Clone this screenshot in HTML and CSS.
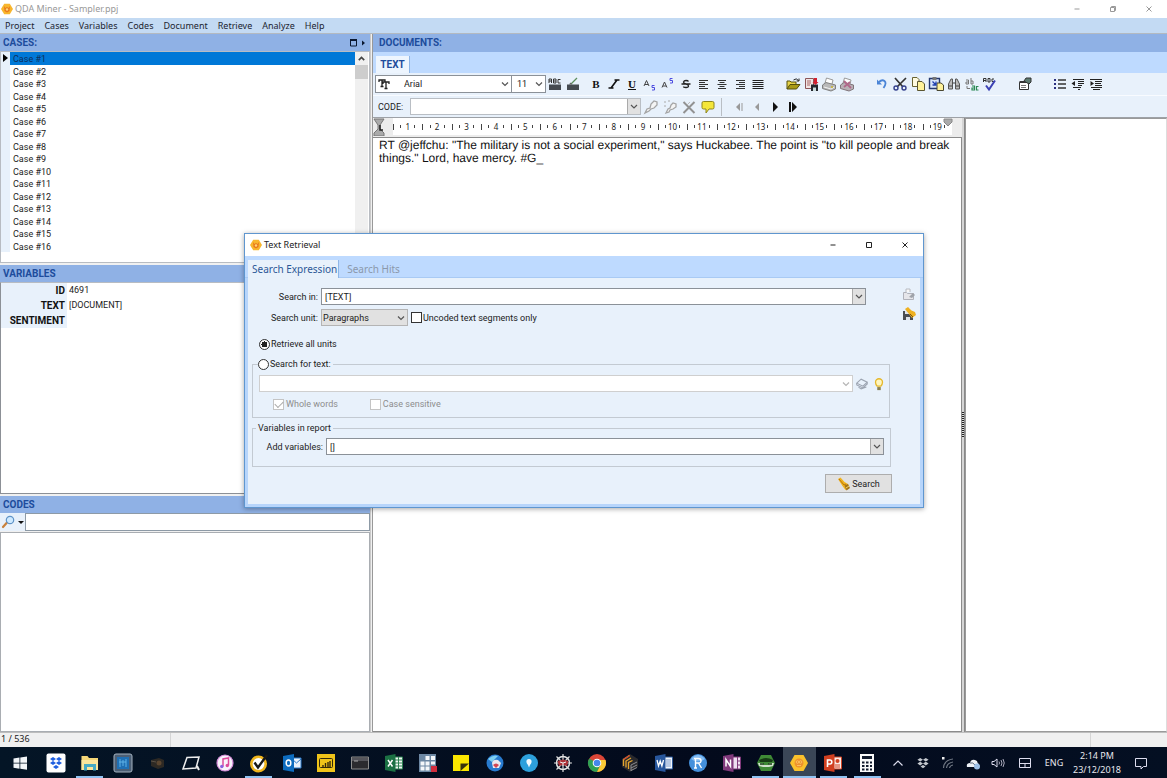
FILE: index.html
```
<!DOCTYPE html>
<html lang="en">
<head>
<meta charset="utf-8">
<title>QDA Miner - Sampler.ppj</title>
<link rel="stylesheet" href="styles.css">
</head>
<body>
<svg class="defs" aria-hidden="true">
  <defs>
    <symbol id="logo" viewBox="0 0 12 12"><path d="M3.200.8h5.600L12 6 8.800 11.200H3.200L0 6z" fill="#f8b62d"/><path d="M3 3l1.500 2L6 4l1.500 1L9 3l-.5 5L6 9.500 3.500 8z" fill="#e8791c"/><circle cx="6" cy="6.500" r="1.200" fill="#ffd778"/></symbol>
    <symbol id="chev" viewBox="0 0 12 12"><path d="M3 4.500l3 3 3-3" fill="none" stroke="currentColor" stroke-width="1.200"/></symbol>
    <symbol id="min" viewBox="0 0 12 12"><path d="M3.500 6h5" stroke="currentColor"/></symbol>
    <symbol id="max" viewBox="0 0 12 12"><path d="M3.500 3.500h5v5h-5z" fill="none" stroke="currentColor"/></symbol>
    <symbol id="close" viewBox="0 0 12 12"><path d="M3.500 3.500l5 5m0-5l-5 5" stroke="currentColor" fill="none"/></symbol>
    <symbol id="torch" viewBox="0 0 14 14"><path d="M1 2l2.500-1.500 4 4.500L11 7l1 4-3.500 2L5.500 9z" fill="#f0b21d"/><path d="M7.500 8.500l3.500-1.500 2 4-3.500 2.500z" fill="#a3741c"/><path d="M2 2l5 6 2-1" fill="none" stroke="#b9770c"/><path d="M9 11l3-2" stroke="#fbd764"/></symbol>
  </defs>
</svg>
<div class="app">
  <header class="titlebar">
    <svg class="logo"><use href="#logo"/></svg>
    <h1>QDA Miner - Sampler.ppj</h1>
    <div class="winbtns">
      <button aria-label="Minimize"><svg><use href="#min"/></svg></button>
      <button aria-label="Restore"><svg viewBox="0 0 12 12"><path d="M3.500 4.500h4v4h-4zM4.500 4.500v-1h4v4h-1" fill="none" stroke="currentColor"/></svg></button>
      <button aria-label="Close"><svg><use href="#close"/></svg></button>
    </div>
  </header>
  <nav class="menu">
    <button>Project</button><button>Cases</button><button>Variables</button><button>Codes</button><button>Document</button><button>Retrieve</button><button>Analyze</button><button>Help</button>
  </nav>
  <main class="work">
    <div class="left">
      <section class="panel cases">
        <h2 class="head"><span>CASES:</span>
          <svg class="headicons" viewBox="0 0 18 10"><path d="M1.500 2h6v6h-6z" fill="none" stroke="#0b1830"/><path d="M1 2h7" stroke="#0b1830" stroke-width="2"/><path d="M13 2.500v5l3-2.500z" fill="#0b1830"/></svg>
        </h2>
        <div class="listbox">
          <ul class="caselist">
            <li class="on">Case #1</li><li>Case #2</li><li>Case #3</li><li>Case #4</li><li>Case #5</li><li>Case #6</li><li>Case #7</li><li>Case #8</li><li>Case #9</li><li>Case #10</li><li>Case #11</li><li>Case #12</li><li>Case #13</li><li>Case #14</li><li>Case #15</li><li>Case #16</li>
          </ul>
          <div class="scroll">
            <svg viewBox="0 0 12 12"><path d="M3.500 7.500L6 5l2.500 2.500" fill="none" stroke="#444" stroke-width="1.500"/></svg>
            <div class="thumb"></div>
          </div>
        </div>
      </section>
      <section class="panel vars">
        <h2 class="head">VARIABLES</h2>
        <div class="varbox">
          <table>
            <tr><th scope="row">ID</th><td>4691</td></tr>
            <tr><th scope="row">TEXT</th><td>[DOCUMENT]</td></tr>
            <tr><th scope="row">SENTIMENT</th><td></td></tr>
          </table>
        </div>
      </section>
      <section class="panel codes">
        <h2 class="head">CODES</h2>
        <div class="codesearch">
          <button aria-label="Search codes"><svg viewBox="0 0 25 16"><path d="M3 13l4-4.500" stroke="#c9813c" stroke-width="2.200" stroke-linecap="round"/><circle cx="10" cy="6" r="3.700" fill="#cfeaff" stroke="#5f93c8" stroke-width="1.200"/><path d="M18 7h6l-3 3z" fill="#111"/></svg></button>
          <input type="text" aria-label="Code filter">
        </div>
        <div class="codebox"></div>
      </section>
    </div>
    <section class="docs">
      <h2 class="head">DOCUMENTS:</h2>
      <div class="tabs"><button class="tab">TEXT</button></div>
      <div class="toolbar">
        <div class="combo font">
          <select aria-label="Font"><option>Arial</option></select>
          <svg class="tt" viewBox="0 0 12 12"><path d="M1 4V2h6v2M4 2v6.500M2.500 8.500h3M5 6V4h6v2M8 4v6.500M6.500 10.500h3" fill="none" stroke="#222" stroke-width="1.300"/></svg>
          <svg class="ch"><use href="#chev"/></svg>
        </div>
        <div class="combo size"><select aria-label="Font size"><option>11</option></select><svg class="ch"><use href="#chev"/></svg></div>
        <div class="grp">
          <button aria-label="Text color"><svg viewBox="0 0 16 16"><path d="M2 8.500h12V14H2z" fill="#454a50"/><path d="M2 7V3h2.500v4M2 5h2.500M6.500 3v4h2.500V5H6.500M9 5V3H6.500M13.500 3.500H11V7h2.500" fill="none" stroke="#333"/></svg></button>
          <button aria-label="Highlight"><svg viewBox="0 0 16 16"><path d="M2 8.500h12V14H2z" fill="#454a50"/><path d="M6 8l6-6" stroke="#5d8f5d" stroke-width="1.200"/><path d="M4 8.500l1.500-2 2 2z" fill="#666"/></svg></button>
        </div>
        <div class="grp g2">
          <button aria-label="Bold" class="b">B</button>
          <button aria-label="Italic"><svg viewBox="0 0 16 16"><path d="M8.500 4h5M2.500 12h5M11 4l-6 8" stroke="#111" stroke-width="1.600"/></svg></button>
          <button aria-label="Underline" class="b u">U</button>
          <button aria-label="Subscript"><svg viewBox="0 0 16 16"><path d="M2 10l2.500-5.500L7 10M3 8.500h3" fill="none" stroke="#444"/><path d="M12.500 9.500H10V11.500h2.500v2.500H10" fill="none" stroke="#4d4de0"/></svg></button>
          <button aria-label="Superscript"><svg viewBox="0 0 16 16"><path d="M2 11.500L4.500 6 7 11.500M3 10h3" fill="none" stroke="#444"/><path d="M12.500 2.500H10V4.500h2.500V7H10" fill="none" stroke="#4d4de0"/></svg></button>
          <button aria-label="Strikethrough"><svg viewBox="0 0 16 16"><path d="M10.500 5.500Q10 4.500 8 4.500T5.500 6q0 1.500 2.500 2t2.500 2q0 1.500-2.500 1.500T5.500 10.500M3.500 8h9" fill="none" stroke="#222" stroke-width="1.300"/></svg></button>
          <button aria-label="Align left"><svg viewBox="0 0 16 16"><path d="M3 4.500h9M3 6.500h6M3 8.500h9M3 10.500h6M3 12.500h9" stroke="#333"/></svg></button>
          <button aria-label="Center"><svg viewBox="0 0 16 16"><path d="M4 4.500h8M5.500 6.500h5M3.500 8.500h9M5.500 10.500h5M4 12.500h8" stroke="#333"/></svg></button>
          <button aria-label="Align right"><svg viewBox="0 0 16 16"><path d="M4 4.500h9M7 6.500h6M4 8.500h9M7 10.500h6M4 12.500h9" stroke="#333"/></svg></button>
          <button aria-label="Justify"><svg viewBox="0 0 16 16"><path d="M2.500 4.500h11M2.500 6.500h11M2.500 8.500h11M2.500 10.500h11M2.500 12.500h11" stroke="#222"/></svg></button>
        </div>
        <div class="grp g3">
          <button aria-label="Open"><svg viewBox="0 0 16 16"><path d="M2 13V5h3l1 1h5v3" fill="#e8d44a" stroke="#55500c"/><path d="M2 13l3-4.500h10L11.500 13z" fill="#a89a17" stroke="#55500c"/><path d="M8.500 4q3-2.500 5 .5M14 2.500v2.500h-2.500" fill="none" stroke="#222"/></svg></button>
          <button aria-label="Export"><svg viewBox="0 0 16 16"><path d="M2.500 2.500h8v10h-8z" fill="#f0e4e4" stroke="#8c5558"/><path d="M4 5h4M4 7h4M4 9h3" stroke="#a66"/><path d="M8 8.500h7V15H8z" fill="#25272d"/><path d="M10 11.500h3V15h-3z" fill="#cdd"/><path d="M11 2h3v4h1.500L12.500 9 9.500 6H11z" fill="#d41f2f"/></svg></button>
          <button aria-label="Print"><svg viewBox="0 0 16 16"><path d="M4 7l1.500-5L12 4l-1 4" fill="#fff" stroke="#999"/><path d="M1.500 9L5 6.500 14.500 9v4L10 15 1.500 12.500z" fill="#b9b9b9" stroke="#808080"/><path d="M3 11l7 2 3.500-2" stroke="#f1f1f1" fill="none"/><path d="M10 11h2" stroke="#c9b52e" stroke-width="1.500"/></svg></button>
          <button aria-label="Print preview"><svg viewBox="0 0 16 16"><path d="M4 7l1.500-5L12 4l-1 4" fill="#fff" stroke="#999"/><path d="M1.500 9L5 6.500 14.500 9v4L10 15 1.500 12.500z" fill="#b9b0b6" stroke="#80757a"/><path d="M5 5l7 7M11 6l-6 5" stroke="#b0688a" stroke-width="1.800"/></svg></button>
        </div>
        <div class="grp g4">
          <button aria-label="Undo"><svg viewBox="0 0 16 16"><path d="M5 6Q8 3 10.500 5T9.500 12" fill="none" stroke="#4a84d6" stroke-width="1.800"/><path d="M3 3.500v5h5z" fill="#4a84d6"/></svg></button>
          <button aria-label="Cut"><svg viewBox="0 0 16 16"><path d="M3 2l8 9M14 2l-9 9" stroke="#333" stroke-width="1.700"/><circle cx="4" cy="12" r="2" fill="none" stroke="#34408c" stroke-width="1.400"/><circle cx="12" cy="12" r="2" fill="none" stroke="#34408c" stroke-width="1.400"/></svg></button>
          <button aria-label="Copy"><svg viewBox="0 0 16 16"><path d="M2.500 1.500h4.500l2 2v7H2.500z" fill="#fffbe0" stroke="#6a6330"/><path d="M7.500 5.500h4.500l2.500 2.500v6.500h-7z" fill="#fff29a" stroke="#5b5530"/></svg></button>
          <button aria-label="Paste"><svg viewBox="0 0 16 16"><path d="M1.500 2.500h10v10h-10z" fill="#d8e5fa" stroke="#25396f" stroke-width="1.400"/><path d="M4.500 1h4v3h-4z" fill="#777"/><path d="M9 7h4l2.500 2v5.500H9z" fill="#fff29a" stroke="#4a4730"/><path d="M4.500 5.500l3.500 3.500M8 5.500V9H4.500" stroke="#1e3fae" stroke-width="1.300" fill="none"/></svg></button>
          <button aria-label="Find"><svg viewBox="0 0 16 16"><path d="M2.500 13V8L5 3h1.500v10zM13.500 13V8L11 3H9.500v10z" fill="#bcbcbc" stroke="#555"/><path d="M6.500 7h3M3 10h3M10 10h3" stroke="#444"/></svg></button>
          <button aria-label="Replace"><svg viewBox="0 0 16 16"><path d="M2 4h2.500v4H2V6h2.500M7 2v6h2V5H7" fill="none" stroke="#777"/><path d="M8 10h2.500v4H8v-2h2.500M14.500 10.500h-2V14h2" fill="none" stroke="#2c8a55" stroke-width="1.200"/><path d="M3 10v2.500h3" fill="none" stroke="#777"/></svg></button>
          <button aria-label="Spelling"><svg viewBox="0 0 16 16"><path d="M1.500 6V2.500H4V6M1.500 4.500H4M6 2.500V6h2V2.500zM12 3h-2v2.500h2" fill="none" stroke="#333"/><path d="M4 9.500l3 4 6-9" fill="none" stroke="#3c42b4" stroke-width="2"/></svg></button>
        </div>
        <div class="grp g4">
          <button aria-label="Properties"><svg viewBox="0 0 16 16"><path d="M2.500 6.500h9v7h-9z" fill="#fff" stroke="#333"/><path d="M2.500 6h9" stroke="#333" stroke-width="2"/><path d="M4 9.500h5M4 11.500h5" stroke="#777"/><path d="M7 5l2-3h5v4l-2 2z" fill="#5d7a70" stroke="#333"/></svg></button>
        </div>
        <div class="grp g4">
          <button aria-label="Bullets"><svg viewBox="0 0 16 16"><path d="M2 3h2v2H2zM2 7h2v2H2zM2 11h2v2H2z" fill="#2a2f80"/><path d="M6 4h8M6 8h8M6 12h8" stroke="#333" stroke-width="1.400"/></svg></button>
          <button aria-label="Outdent"><svg viewBox="0 0 16 16"><path d="M3 3.500h11M8 5.500h6M8 7.500h6M8 9.500h4M3 11.500h8M8 13.500h2" stroke="#222"/><path d="M1.500 7.500L5 5v5z" fill="#222"/></svg></button>
          <button aria-label="Indent"><svg viewBox="0 0 16 16"><path d="M2 3.500h12M7 5.500h7M7 7.500h6M7 9.500h7M3 11.500h11M5 13.500h7" stroke="#222"/><path d="M6 7.500L2.500 5v5z" fill="#222"/></svg></button>
        </div>
      </div>
      <div class="codebar">
        <label for="code">CODE:</label>
        <div class="combo code"><select id="code"><option></option></select><svg class="ch btn"><use href="#chev"/></svg></div>
        <button aria-label="Assign code"><svg viewBox="0 0 16 16"><path d="M2 14l2-4 3-1 1-4 3-3 3 1v3l-3 3-3 1-2 2z" fill="#f4f4f4" stroke="#a4a4a4" stroke-width="1.300"/></svg></button>
        <button aria-label="Edit code"><svg viewBox="0 0 16 16"><path d="M4 14l2-4 2-1 1-3 2-2 3 1v3l-3 2-3 1-1 2z" fill="#f4f4f4" stroke="#a4a4a4" stroke-width="1.300"/><path d="M2 3h2M2 7h2M6 2h2" stroke="#aaa"/></svg></button>
        <button aria-label="Delete code"><svg viewBox="0 0 16 16"><path d="M2.500 3l11 11M13.500 3l-11 11" stroke="#929292" stroke-width="2"/><path d="M6 6l3-3" stroke="#bbb"/></svg></button>
        <button aria-label="Comment"><svg viewBox="0 0 16 16"><path d="M3.500 2.500h9q1.500 0 1.500 1.500v4.500q0 1.500-1.500 1.500H9l-3 4v-4H3.500Q2 10 2 8.500V4q0-1.500 1.500-1.500z" fill="#f4e63a" stroke="#8e861f"/></svg></button>
        <div class="nav">
          <button aria-label="First"><svg viewBox="0 0 16 16"><path d="M9 4v8L5 8zM10.500 4h1v8h-1z" fill="#999"/></svg></button>
          <button aria-label="Previous"><svg viewBox="0 0 16 16"><path d="M10 4v8L6 8z" fill="#999"/></svg></button>
          <button aria-label="Next"><svg viewBox="0 0 16 16"><path d="M6 3v10l5-5z" fill="#111"/></svg></button>
          <button aria-label="Last"><svg viewBox="0 0 16 16"><path d="M7 3v10l5-5zM4 3h2v10H4z" fill="#111"/></svg></button>
        </div>
      </div>
      <div class="docarea">
        <div class="page">
          <div class="ruler">
            <svg class="rmark" viewBox="0 0 12 18"><path d="M1 1h10L7 7v4l4 4v3H1v-3l4-4V7z" fill="#aaa" stroke="#777"/><path d="M7 7v5h3" fill="none" stroke="#222" stroke-width="1.500"/></svg>
            <div class="nums"><span>1</span><span>2</span><span>3</span><span>4</span><span>5</span><span>6</span><span>7</span><span>8</span><span>9</span><span>10</span><span>11</span><span>12</span><span>13</span><span>14</span><span>15</span><span>16</span><span>17</span><span>18</span><span>19</span></div>
            <svg class="rend" viewBox="0 0 12 18"><path d="M2 1h8v3L6 8 2 4z" fill="#aaa" stroke="#888"/></svg>
          </div>
          <p class="text">RT @jeffchu: "The military is not a social experiment," says Huckabee. The point is "to kill people and break things." Lord, have mercy. #G_</p>
        </div>
        <div class="split"><i></i></div>
        <div class="margin"></div>
      </div>
    </section>
  </main>
  <footer class="status"><span>1 / 536</span><span></span><span></span></footer>
  <div class="taskbar">
    <button class="start" aria-label="Start"><svg viewBox="0 0 20 20"><path d="M3.500 5.500l6-1v5.200h-6zM10.300 4.400L17 3.500v6.200h-6.700zM3.500 10.500h6v5.200l-6-1zM10.300 10.500H17v6.200l-6.700-.9z" fill="#f2f5f8"/></svg></button>
    <div class="apps">
      <button aria-label="Dropbox"><svg viewBox="0 0 20 20"><rect x=".5" y=".5" width="19" height="19" rx="2" fill="#fff"/><path d="M7 4l3 2-3 2-3-2zM13 4l3 2-3 2-3-2zM7 8l3 2-3 2-3-2zM13 8l3 2-3 2-3-2zM10 12l3 2-3 2-3-2z" fill="#1f5fe0"/></svg></button>
      <button aria-label="File Explorer" class="run"><svg viewBox="0 0 20 20"><path d="M1.500 3h6l1.500 2h9v12h-16.500z" fill="#f5d778"/><path d="M1.500 7h16.500v10H1.500z" fill="#fbe59b"/><path d="M4 17.500V11h12v6.500h-3V14H7v3.500z" fill="#46aac4"/></svg></button>
      <button aria-label="Viewer"><svg viewBox="0 0 20 20"><rect x="1" y="1" width="18" height="18" rx="2" fill="#4c5f75" stroke="#a5b3c0"/><path d="M4 4h12v12H4z" fill="#1f6fb4"/><path d="M7 6v8M6 9h7M10 7v6M13 6v8" stroke="#5fb2e6"/></svg></button>
      <button aria-label="Camera"><svg viewBox="0 0 20 20"><path d="M4 7l8-2 5 2v7l-6 2-7-3z" fill="#2d2924"/><circle cx="12" cy="10" r="2.500" fill="#5b4630"/><path d="M4 8l5 1" stroke="#5a5146"/></svg></button>
      <button aria-label="Tablet"><svg viewBox="0 0 20 20"><path d="M6 4.500l12-.5-3 11-13 1z" fill="none" stroke="#eee" stroke-width="1.500"/><path d="M16 13l2 4" stroke="#eee" stroke-width="2"/></svg></button>
      <button aria-label="iTunes"><svg viewBox="0 0 20 20"><circle cx="10" cy="10" r="8" fill="#f8f3fb" stroke="#d48bd8" stroke-width="1.200"/><path d="M8 13.500V6l5.500-1v7.500" fill="none" stroke="#dd4c9c" stroke-width="1.500"/><circle cx="6.800" cy="13.500" r="1.700" fill="#8a62e0"/><circle cx="12.300" cy="12.500" r="1.700" fill="#dd4c9c"/></svg></button>
      <button aria-label="Norton" class="run"><svg viewBox="0 0 20 20"><circle cx="9.500" cy="11" r="7.200" fill="#fff" stroke="#efb51d" stroke-width="2.600"/><path d="M5.500 9.500l3.500 5L18 2" fill="none" stroke="#181818" stroke-width="2.400"/></svg></button>
      <button aria-label="Outlook"><svg viewBox="0 0 20 20"><path d="M10 5h9v10h-9z" fill="#e9f2fb" stroke="#2a79c8"/><path d="M10 6l4.500 4L19 6" fill="none" stroke="#2a79c8"/><path d="M1 3l11-2v18L1 17z" fill="#0d6cbf"/><ellipse cx="6.500" cy="10" rx="2.300" ry="3" fill="none" stroke="#fff" stroke-width="1.500"/></svg></button>
      <button aria-label="Power BI"><svg viewBox="0 0 20 20"><path d="M1 1h18v18H1z" fill="#f0c419"/><rect x="3.500" y="5.500" width="13" height="9" rx="1" fill="none" stroke="#33290a"/><path d="M7 15v-3M9.500 15v-5M12 15V9M14 15V8" stroke="#33290a" stroke-width="1.400"/></svg></button>
      <button aria-label="Terminal"><svg viewBox="0 0 20 20"><path d="M1.500 4h17v12h-17z" fill="#2b2b2f" stroke="#8d8d8d"/><path d="M2 5h16v3H2z" fill="#55555b"/><path d="M4 8h4" stroke="#aaa"/></svg></button>
      <button aria-label="Excel"><svg viewBox="0 0 20 20"><path d="M10 4h8.500v12H10z" fill="#f0f7f2" stroke="#2c8152"/><path d="M11 7h7M11 10h7M11 13h7M14.500 4v12" stroke="#2c8152"/><path d="M1 3l10.500-2v18L1 17z" fill="#1b7043"/><path d="M4 7l4.500 6.500M8.500 7L4 13.500" stroke="#fff" stroke-width="1.500"/></svg></button>
      <button aria-label="Grid"><svg viewBox="0 0 20 20"><path d="M1 1h17v18H1z" fill="#6c87a3"/><path d="M7.500 3h4v4h-4zM13 3h4v4h-4zM2.500 8.500h4v4h-4zM7.500 8.500h4v4h-4zM13 8.500h4v3h-4zM2.500 13.500h4v4h-4zM7.500 13.500h4v4h-4z" fill="#f4f7fa"/><path d="M13 13h6v6h-6z" fill="#d22d3d"/></svg></button>
      <button aria-label="Sticky Notes"><svg viewBox="0 0 20 20"><path d="M2 2h16v16H2z" fill="#fbe600"/><path d="M9.500 10.500H18L9.500 18z" fill="#38330b"/></svg></button>
      <button aria-label="Globe"><svg viewBox="0 0 20 20"><circle cx="10" cy="10" r="8.500" fill="#287bd0"/><path d="M3 6q5-5 10-3l-6 6z" fill="#7ed0f2"/><path d="M7 10q1-4 6-3l3 3-2 5H8z" fill="#eae8ee"/><path d="M8 12q3-3 6 0l-3 3z" fill="#d14552"/></svg></button>
      <button aria-label="Map"><svg viewBox="0 0 20 20"><circle cx="10" cy="10" r="9" fill="#2da0dc"/><path d="M10 6a2.600 2.600 0 012.600 2.600Q12.600 10.300 11 12l-1 2.500-1-2.500Q7.400 10.300 7.400 8.600A2.600 2.600 0 0110 6z" fill="#f4fbff"/></svg></button>
      <button aria-label="Web"><svg viewBox="0 0 20 20"><path d="M10 1v18M1 10h18M3.500 3.500l13 13M16.500 3.500l-13 13" stroke="#d9d9d9" stroke-width="1.200"/><circle cx="10" cy="10" r="6.500" fill="none" stroke="#e3e3e3" stroke-width="1.500"/><path d="M4.500 8L10 6.500 15.500 8l-1.500 5-4-1-4 1z" fill="#ab3238"/><path d="M7 9l3 1 3-1M10 10v3" fill="none" stroke="#eee"/></svg></button>
      <button aria-label="Chrome"><svg viewBox="0 0 20 20"><circle cx="10" cy="10" r="9" fill="#dc4637"/><path d="M10 10L2.200 5.500A9 9 0 0010 19l3-6z" fill="#2ea154"/><path d="M10 19a9 9 0 008.500-12H10l3.500 5z" fill="#fbcb36"/><circle cx="10" cy="10" r="4.300" fill="#fff"/><circle cx="10" cy="10" r="3.300" fill="#4587ec"/></svg></button>
      <button aria-label="Hexagons"><svg viewBox="0 0 20 20"><path d="M2 6l8-5 8 5v8l-8 5-8-5z" fill="#29292d"/><path d="M3.500 13V6.500l6-4M6 14.500V8l5-3M8.500 16V9.500l4-2" fill="none" stroke="#e4a52d" stroke-width="1.300"/><path d="M3.500 6.500l6-4" stroke="#cc4930" stroke-width="1.500"/><path d="M11 18v-6l6-3M11 15l6-3M11 17.500l6-3" fill="none" stroke="#8d8d92"/></svg></button>
      <button aria-label="Word"><svg viewBox="0 0 20 20"><path d="M10 4h8.500v12H10z" fill="#f2f6fc" stroke="#2b5797"/><path d="M12 7h5M12 9h5M12 11h5M12 13h5" stroke="#7c9bcc"/><path d="M1 3l10.500-2v18L1 17z" fill="#27569c"/><path d="M3 7l1.500 6 1.700-5 1.700 5L9.500 7" fill="none" stroke="#fff" stroke-width="1.300"/></svg></button>
      <button aria-label="RStudio"><svg viewBox="0 0 20 20"><circle cx="10" cy="10" r="9" fill="#4490dc"/><path d="M3 6q7-8 14 0-7 5-14 0z" fill="#86bdf2"/><path d="M7.500 15V5.500h3q2.500 0 2.500 2.300T10.500 10h-3M10.500 10l3 5M6 5.500h2M6 15h3" fill="none" stroke="#fff" stroke-width="1.400"/></svg></button>
      <button aria-label="OneNote"><svg viewBox="0 0 20 20"><path d="M10 4h8.500v12H10z" fill="#eedff0" stroke="#80397b"/><path d="M15.500 4v12M15.500 8h3M15.500 12h3" stroke="#80397b"/><path d="M1 3l10.500-2v18L1 17z" fill="#80397b"/><path d="M4 13.500v-7l4.500 7v-7" fill="none" stroke="#fff" stroke-width="1.500"/></svg></button>
      <button aria-label="Spy" class="run"><svg viewBox="0 0 20 20"><path d="M5 2h10l4 8-4 8H5l-4-8z" fill="#3f8a36"/><path d="M3 7q7-4 14 0l-1 2H4z" fill="#173c15"/><path d="M2 10h5l1 2h4l1-2h5l-1 3-4 1H7l-4-1z" fill="#cfe0cb"/><path d="M4 11h4M12 11h4" stroke="#173c15" stroke-width="1.500"/></svg></button>
      <button aria-label="QDA Miner" class="run active"><svg viewBox="0 0 20 20"><path d="M5.500 2h9L19 10l-4.500 8h-9L1 10z" fill="#fac12c"/><circle cx="10" cy="10" r="4.500" fill="#ee912c"/><circle cx="8.500" cy="9" r="1.300" fill="none" stroke="#f9c060"/><circle cx="11.500" cy="9" r="1.300" fill="none" stroke="#f9c060"/><path d="M8 12.500h4" stroke="#f9c060"/></svg></button>
      <button aria-label="PowerPoint" class="run"><svg viewBox="0 0 20 20"><path d="M10 4h8.500v12H10z" fill="#fbeae5" stroke="#d14424"/><path d="M12 12h5M12 14h5" stroke="#d14424"/><circle cx="14.500" cy="8" r="2" fill="#d14424"/><path d="M1 3l10.500-2v18L1 17z" fill="#d03f20"/><path d="M4.500 14V7H7q1.800 0 1.800 2T7 11H4.500" fill="none" stroke="#fff" stroke-width="1.600"/></svg></button>
      <button aria-label="Calculator" class="run"><svg viewBox="0 0 20 20"><path d="M3 1h14v18H3z" fill="#fafafa"/><path d="M5 3h10v3H5z" fill="#111a2c"/><path d="M5 8.500h2.500v2H5zM9 8.500h2.500v2H9zM13 8.500h2v2h-2zM5 12h2.500v2H5zM9 12h2.500v2H9zM13 12h2v2h-2zM5 15.500h2.500v2H5zM9 15.500h2.500v2H9zM13 15.500h2v2h-2z" fill="#111a2c"/></svg></button>
    </div>
    <div class="tray">
      <button aria-label="Show hidden icons"><svg viewBox="0 0 16 16"><path d="M3.500 10.500L8 6l4.500 4.500" fill="none" stroke="#dde" stroke-width="1.200"/></svg></button>
      <button aria-label="Dropbox"><svg viewBox="0 0 16 16"><path d="M5.200 3l2.800 1.800-2.800 1.800-2.800-1.800zM10.800 3l2.800 1.800-2.800 1.800L8 4.800zM5.200 6.800L8 8.600l-2.800 1.800-2.800-1.800zM10.800 6.800l2.800 1.800-2.800 1.800L8 8.600zM8 10l2.500 1.600L8 13.200l-2.500-1.600z" fill="#c4c8ce"/></svg></button>
      <button aria-label="Wi-Fi"><svg viewBox="0 0 16 16"><path d="M3.500 13Q4 5 13 4M6.500 13q.5-5 6.500-6M9.500 13q.5-2.500 3.500-3" fill="none" stroke="#6e7682" stroke-width="1.200"/><path d="M2 2h2.500v2.500H2z" fill="#eee"/></svg></button>
      <button aria-label="OneDrive"><svg viewBox="0 0 16 16"><path d="M2 12Q1 8 5 8q1-4 5-3 3 1 2.500 3Q15 9 14 12z" fill="#eef2f7"/><path d="M5 8q3-1 5 2" fill="none" stroke="#56657a"/><circle cx="12" cy="11.500" r="3" fill="#9cc0e8"/></svg></button>
      <button aria-label="Volume"><svg viewBox="0 0 16 16"><path d="M2 6.500h2L7 4v8L4 9.500H2z" fill="none" stroke="#dde"/><path d="M9 6.500q1 1.500 0 3M11 5q2 3 0 6M13 4q2.500 4 0 8" fill="none" stroke="#aab"/></svg></button>
      <button aria-label="Touchpad" class="wide"><svg viewBox="0 0 16 16"><path d="M2.500 3.500h11v9h-11zM2.500 8.500h11M8 8.500v4" fill="none" stroke="#dde"/></svg></button>
      <button class="lang">ENG</button>
      <button class="clock"><span>2:14 PM</span><span>23/12/2018</span></button>
      <button aria-label="Notifications" class="note"><svg viewBox="0 0 16 16"><path d="M2.500 3.500h11v8h-3L8 14v-2.500H2.500z" fill="none" stroke="#dde"/></svg></button>
    </div>
  </div>

  <div class="dialog" role="dialog" aria-labelledby="dlg-title">
    <div class="dtitle">
      <svg class="logo"><use href="#logo"/></svg>
      <h2 id="dlg-title">Text Retrieval</h2>
      <div class="winbtns">
        <button aria-label="Minimize"><svg><use href="#min"/></svg></button>
        <button aria-label="Maximize"><svg><use href="#max"/></svg></button>
        <button aria-label="Close"><svg><use href="#close"/></svg></button>
      </div>
    </div>
    <div class="dtabs"><button class="dtab on">Search Expression</button><button class="dtab">Search Hits</button></div>
    <div class="pane">
      <form class="form">
        <div class="row r1">
          <label class="lab" for="in">Search in:</label>
          <div class="combo in"><select id="in"><option>[TEXT]</option></select><svg class="ch btn"><use href="#chev"/></svg></div>
        </div>
        <div class="row r2">
          <label class="lab" for="unit">Search unit:</label>
          <div class="combo unit"><select id="unit"><option>Paragraphs</option></select><svg class="ch"><use href="#chev"/></svg></div>
          <label class="opt"><input type="checkbox">Uncoded text segments only</label>
        </div>
        <label class="opt all"><input type="radio" name="mode" checked>Retrieve all units</label>
        <fieldset class="fs1">
          <legend><label class="opt"><input type="radio" name="mode">Search for text:</label></legend>
          <div class="row">
            <div class="combo find off"><select aria-label="Search text" disabled><option></option></select><svg class="ch"><use href="#chev"/></svg></div>
            <button type="button" class="ib" aria-label="Thesaurus" disabled><svg viewBox="0 0 16 16"><path d="M2 7l5-4.500L14 6l-5 4.500zM2 7v2l7 3.500 5-4.500V6M4 11.500l3 2 6-2" fill="none" stroke="#9ba3b0" stroke-width="1.200"/></svg></button>
            <button type="button" class="ib" aria-label="Suggestions"><svg viewBox="0 0 16 16"><path d="M6 10.500Q4 8.500 4 6a4 4 0 018 0q0 2.500-2 4.500z" fill="#fff6bf" stroke="#e5b82b" stroke-width="1.500"/><path d="M6 11.500h4V15H6z" fill="#8a8050"/></svg></button>
          </div>
          <div class="checks">
            <label class="opt dis"><input type="checkbox" checked disabled>Whole words</label>
            <label class="opt dis"><input type="checkbox" disabled>Case sensitive</label>
          </div>
        </fieldset>
        <fieldset class="fs2">
          <legend>Variables in report</legend>
          <div class="row">
            <label class="lab" for="vars">Add variables:</label>
            <div class="combo add"><select id="vars"><option>[]</option></select><svg class="ch btn"><use href="#chev"/></svg></div>
          </div>
        </fieldset>
        <button type="button" class="search"><svg><use href="#torch"/></svg>Search</button>
      </form>
      <div class="side">
        <button aria-label="Open query" disabled><svg viewBox="0 0 14 14"><path d="M1.500 12.500V5.500h3l1 1h6v6z" fill="#e6e6ea" stroke="#b0b2ba"/><path d="M4 5V2h4v3" fill="#f8f8f8" stroke="#b8bac0"/><path d="M7 10l4-4 2 2-3 3z" fill="#9fa3aa"/></svg></button>
        <button aria-label="Save query"><svg viewBox="0 0 14 14"><path d="M1 4h10v9H1z" fill="#4b4d52"/><path d="M3 4h5v3H3zM4 10h4v3H4z" fill="#dfe3ea"/><path d="M3 2l3-2 3.500 3.500L13 5l1 3-4 3-3-4z" fill="#efb120"/><path d="M8 7l3 3" stroke="#7e560c"/></svg></button>
      </div>
    </div>
  </div>
</div>
</body>
</html>
```
FILE: styles.css
```
:root {
  --ui: "Noto Sans", "Open Sans", sans-serif;
  --narrow: Roboto, "Liberation Sans", sans-serif;
  --bar: #8fb1e5;
  --strip: #bedaff;
  --tool: #e8f1fb;
  --line: #8c9096;
}
* { box-sizing: border-box; }
html, body { height: 100%; }
body { margin: 0; font: 9px/12px var(--ui); color: #222; background: #fff; }
button, input, select { font: inherit; color: inherit; margin: 0; }
button { border: 0; background: none; padding: 0; }
h1, h2, p, ul { margin: 0; padding: 0; font-size: inherit; }
svg { display: block; }
.defs { position: absolute; width: 0; height: 0; }

.app { height: 100vh; display: flex; flex-direction: column; position: relative; overflow: hidden; }

.titlebar { flex: 0 0 18px; display: flex; align-items: center; gap: 2px; padding-left: 1px; color: #999; }
.titlebar h1 { font-weight: 400; }
.logo { width: 12px; height: 12px; }
.winbtns { margin-left: auto; display: flex; }
.winbtns button { width: 36px; display: grid; place-items: center; }
.winbtns svg { width: 12px; height: 12px; }

.menu { flex: 0 0 16px; display: flex; gap: 10px; padding: 0 5px; background: #c3daf3; border-bottom: 1px solid #b3b9c0; color: #1c2430; }

.work { flex: 1; min-height: 0; display: flex; background: #f0f0f0; }
.left { flex: 0 0 371px; display: flex; flex-direction: column; border-right: 1px solid #c9c9c9; font-family: var(--narrow); }
.panel { flex: 231 0 0; min-height: 0; display: flex; flex-direction: column; }
.head { flex: 0 0 17px; display: flex; align-items: center; justify-content: space-between; padding: 0 3px; background: var(--bar); color: #1d4c9c; font: 700 10px/12px var(--narrow); }
.headicons { width: 18px; height: 10px; }

.listbox { flex: 1; display: flex; align-items: flex-start; background: #fff; border: 1px solid #b8bcc2; margin-bottom: 2px; padding-right: 1px; }
.caselist { flex: 1; height: 200px; display: flex; flex-direction: column; list-style: none; line-height: 14px; background: linear-gradient(90deg, var(--tool) 9px, #fff 9px); }
.caselist li { flex: 1 1 0; min-height: 0; margin-left: 9px; padding-left: 3px; }
.caselist .on { background: #0078d7; color: #0d2f5c; position: relative; }
.caselist .on::before { content: ""; position: absolute; left: -7px; top: 2px; border-left: 5px solid #000; border-top: 4px solid transparent; border-bottom: 4px solid transparent; }
.scroll { align-self: stretch; width: 13px; background: #f0f0f0; }
.scroll svg { height: 13px; }
.thumb { height: 14px; background: #cdcdcd; }

.varbox { flex: 1; background: #fff; border: 1px solid var(--line); border-top-color: #b8bcc2; margin-bottom: 2px; }
.varbox table { border-collapse: collapse; }
.varbox th, .varbox td { height: 15px; padding: 0 2px; line-height: 15px; }
.varbox th { width: 66px; text-align: right; background: var(--tool); color: #111; font-size: 10px; }

.codes { flex-grow: 236; }
.codesearch { flex: 0 0 18px; display: flex; background: var(--tool); }
.codesearch svg { width: 25px; height: 16px; }
.codesearch input { flex: 1; min-width: 0; border: 1px solid #8d9aa6; background: #fff; }
.codebox { flex: 1; margin-top: 1px; background: #fff; border: 1px solid #a9adb2; }

.docs { flex: 1; min-width: 0; margin-left: 1px; border-left: 1px solid #999; display: flex; flex-direction: column; font-family: var(--narrow); }
.docs > .head { padding-left: 6px; flex-basis: 18px; }
.tabs { flex: 0 0 21px; display: flex; align-items: flex-end; padding-left: 3px; background: var(--strip); }
.tab { height: 17px; width: 34px; background: #edf5fe; border-right: 1px solid #8fb6e6; color: #1d4c9c; font-weight: 700; font-size: 10px; }
.toolbar { flex: 0 0 23px; display: flex; align-items: center; padding-left: 2px; background: var(--tool); border-bottom: 1px solid #f8fbff; }
.grp { display: flex; }
.g2 { margin-left: 5px; }
.g3, .g4 { margin-left: 17px; }
.grp button, .codebar button { width: 18px; height: 18px; display: grid; place-items: center; flex: none; }
.grp svg, .codebar button svg { width: 16px; height: 16px; }
.grp .b { font: 700 11px/16px "Liberation Serif", serif; color: #111; }
.u { text-decoration: underline; }

.combo { display: grid; min-width: 0; }
.combo > * { grid-area: 1 / 1; }
.combo select { appearance: none; width: 100%; height: 17px; padding: 0 3px; background: #fff; border: 1px solid #8b9198; border-radius: 0; }
.combo .ch { width: 12px; height: 12px; justify-self: end; align-self: center; margin-right: 1px; color: #555; pointer-events: none; }
.combo .ch.btn { width: 13px; height: 15px; background: #e1e1e1; border-left: 1px solid #aaa; }
.font { width: 137px; }
.font select, .size select { height: 18px; }
.font select { padding-left: 28px; }
.tt { width: 12px; height: 12px; margin-left: 3px; align-self: center; pointer-events: none; }
.size { width: 34px; }
.size select { padding-left: 5px; border-left: 0; }

.codebar { flex: 0 0 22px; display: flex; align-items: center; gap: 1px; padding-left: 5px; background: var(--tool); border-bottom: 1px solid #9da1a6; }
.codebar label { width: 31px; }
.code { width: 231px; }
.code select { border-color: #b9bec4; }
.nav { display: flex; margin-left: 3px; padding-left: 8px; border-left: 1px solid #b9bec4; }

.docarea { flex: 1; min-height: 0; display: flex; }
.page { flex: 1; min-width: 0; display: flex; flex-direction: column; }
.ruler { flex: 0 0 19px; display: flex; padding-right: 8px; background: #ececec; }
.rmark, .rend { flex: none; width: 12px; height: 18px; }
.nums { flex: 1; display: flex; margin: 0 -10px 2px 8px; background: #fff; font-family: var(--ui); }
.nums span { flex: 1; text-align: center; line-height: 17px; font-size: 8px; background: linear-gradient(#444, #444) 0 50% / 1px 6px no-repeat, linear-gradient(#444, #444) 25% 50% / 1px 3px no-repeat, linear-gradient(#444, #444) 75% 50% / 1px 3px no-repeat; }
.text { flex: 1; padding: 1px 8px 0 6px; background: #fff; border: 1px solid #8b8b8b; border-left: 0; font: 12px/13px "Liberation Sans", Arial, sans-serif; text-rendering: geometricPrecision; color: #111; }
.split { width: 3px; background: #d5d5d5; display: flex; align-items: center; border-right: 1px solid #888; }
.split i { width: 3px; height: 26px; background: repeating-linear-gradient(#222 0 1px, #ddd 1px 2px); }
.margin { flex: 0 0 202px; background: #fff; border: 1px solid #9a9a9a; border-right-color: #ddd; }

.status { flex: 0 0 15px; display: flex; background: #f0f0f0; border-top: 1px solid #bdbdbd; }
.status span { flex: 1; padding-left: 1px; border-right: 1px solid #d5d5d5; }
.status span:first-child { flex: 0 0 171px; }
.status span:last-child { flex: 0 0 76px; border: 0; }

.taskbar { flex: 0 0 31px; display: flex; background: linear-gradient(90deg, #041526, #030a1c 60%, #040f22); color: #e8e8ee; }
.start { width: 39px; display: grid; place-items: center; }
.start svg, .apps svg { width: 20px; height: 20px; }
.apps { flex: 1; display: flex; }
.apps button { flex: 1; display: grid; place-items: center; }
.apps .run { background: linear-gradient(#8fc2f2, #8fc2f2) 50% 100% / 27px 2px no-repeat; }
.apps .active { background: linear-gradient(#8fc2f2, #8fc2f2) 50% 100% / 100% 2px no-repeat #3a4657; }
.tray { flex: 0 0 283px; display: flex; align-items: stretch; padding-left: 1px; }
.tray button { width: 25px; display: grid; place-items: center; align-content: center; }
.tray svg { width: 16px; height: 16px; }
.tray .wide { width: 30px; }
.tray .lang { width: 28px; }
.tray .clock { width: 58px; line-height: 14px; }
.tray .note { width: 29px; }

.dialog { position: absolute; left: 244px; top: 233px; width: 680px; background: #fff; border: 1px solid #5f96cf; box-shadow: 0 1px 5px rgba(0, 0, 0, .35); }
.dtitle { height: 22px; display: flex; align-items: center; gap: 2px; padding-left: 5px; color: #222; }
.dtitle h2 { font-weight: 400; }
.dtabs { display: flex; align-items: flex-end; height: 22px; padding-left: 3px; background: var(--strip); border-bottom: 1px solid #a9caf4; font-size: 10px; }
.dtab { height: 17px; padding: 0 8px; color: #8b98ab; }
.dtab.on { padding: 0 1px 0 4px; margin-bottom: -1px; height: 18px; background: var(--tool); border-right: 1px solid #8fb6e6; color: #2b5797; }
.pane { display: flex; border: 3px solid #b7d5fb; border-top: 0; background: var(--tool); padding-bottom: 11px; font-family: var(--narrow); }
.form { flex: 1; min-width: 0; display: flex; flex-direction: column; align-items: flex-start; padding: 10px 0 0 4px; }
.row { display: flex; align-items: center; }
.lab { width: 69px; padding-right: 3px; text-align: right; white-space: nowrap; }
.r1, .fs1, .fs2 { align-self: stretch; }
.in { flex: 1; margin-right: 26px; }
.r2 { margin-top: 4px; }
.unit { width: 87px; margin-right: 3px; }
.unit select { background: #e1e1e1; border-color: #b4b4b4; padding-left: 1px; }
.opt { display: flex; align-items: center; gap: 1px; }
.opt input { appearance: none; flex: none; width: 11px; height: 11px; border: 1px solid #333; background: #fff; }
.opt input[type="radio"] { border-radius: 50%; }
.opt input[type="radio"]:checked { background: radial-gradient(#222 0 3px, #fff 3px); }
.opt.dis { color: #8d8d8d; gap: 2px; }
.opt.dis input { border-color: #c4c4c4; display: grid; place-items: center; }
.opt.dis input:checked::before { content: ""; width: 7px; height: 4px; border: solid #aaa; border-width: 0 0 1px 1px; transform: rotate(-45deg); margin-top: -2px; }
.all { margin: 12px 0 0 7px; }
fieldset { margin: 0; min-width: 0; border: 1px solid #c3cad2; }
.fs1 { margin-top: 8px; margin-right: 2px; padding: 5px 2px 7px 6px; }
.fs2 { margin-top: 4px; margin-right: 1px; padding: 4px 6px 11px 0; }
legend { padding: 0 2px 0 0; }
.fs1 legend { margin-left: -1px; }
.fs2 legend { padding: 0 2px; margin-left: 3px; }
.find { flex: 1; }
.off select { border-color: #cfcfcf; opacity: 1; }
.off .ch { color: #b5b5b5; }
.ib { width: 17px; display: grid; place-items: center; }
.ib svg { width: 14px; height: 14px; }
.checks { display: flex; gap: 32px; padding: 6px 0 0 14px; }
.fs2 .lab { width: 73px; }
.add { flex: 1; }
.search { align-self: flex-end; margin-top: 7px; width: 67px; height: 19px; display: flex; align-items: center; justify-content: center; gap: 1px; background: #e1e1e1; border: 1px solid #adadad; }
.search svg { width: 14px; height: 14px; }
.side { flex: 0 0 28px; padding: 9px 0 0 10px; display: flex; flex-direction: column; gap: 6px; }
.side svg { width: 14px; height: 14px; }
```
